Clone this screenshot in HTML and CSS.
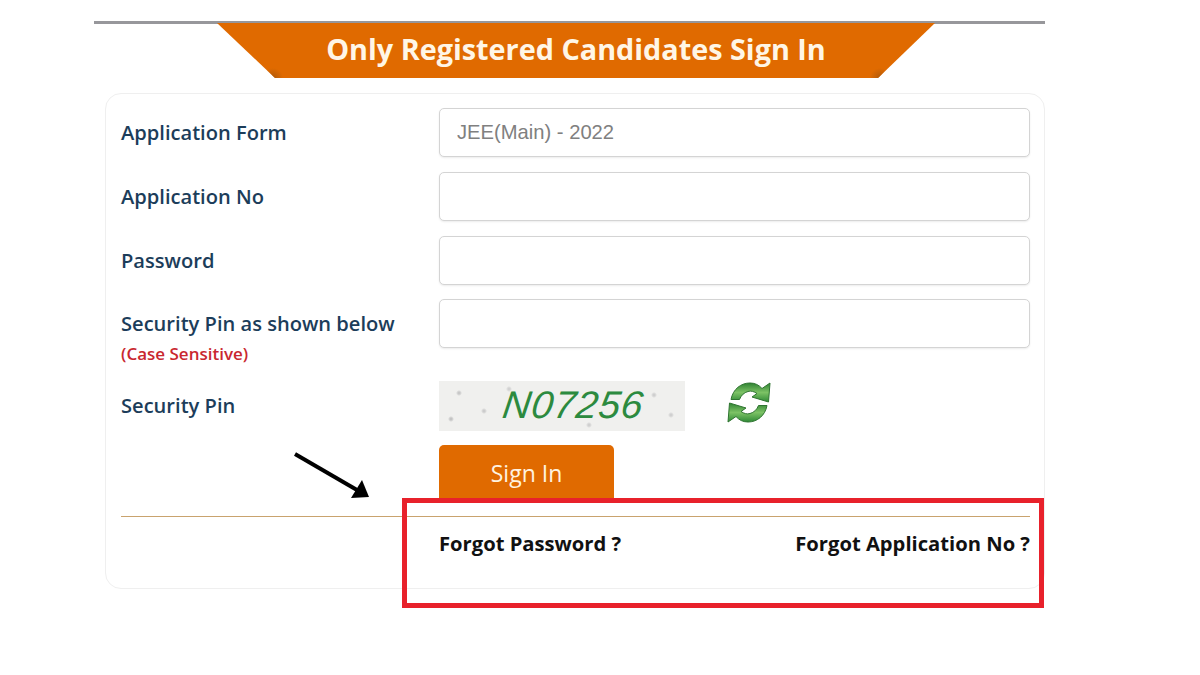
FILE: index.html
```html
<!DOCTYPE html>
<html lang="en">
<head>
    <meta charset="UTF-8">
    <meta name="viewport" content="width=device-width, initial-scale=1.0">
    <title>Candidate Sign In</title>
    <link rel="stylesheet" href="styles.css">
</head>
<body>
    <div class="page">
        <div class="top-line"></div>
        <h1 class="banner">Only Registered Candidates Sign In</h1>

        <form class="card">
            <div class="form-row">
                <label class="form-label">Application Form</label>
                <input class="form-input" type="text" placeholder="JEE(Main) - 2022" disabled>
            </div>
            <div class="form-row">
                <label class="form-label">Application No</label>
                <input class="form-input" type="text">
            </div>
            <div class="form-row">
                <label class="form-label">Password</label>
                <input class="form-input" type="password">
            </div>
            <div class="form-row form-row-pin">
                <label class="form-label">Security Pin as shown below
                    <span class="case-note">(Case Sensitive)</span>
                </label>
                <input class="form-input" type="text">
            </div>
            <div class="form-row captcha-row">
                <label class="form-label">Security Pin</label>
                <div class="captcha-wrap">
                    <div class="captcha"><span class="captcha-text">N07256</span></div>
                    <svg class="refresh-icon" viewBox="0 0 44 44" width="44" height="44">
                        <defs>
                            <linearGradient id="greenA" x1="0" y1="0" x2="0" y2="1">
                                <stop offset="0" stop-color="#2f8232"/>
                                <stop offset="0.5" stop-color="#7cc265"/>
                                <stop offset="1" stop-color="#2f8a36"/>
                            </linearGradient>
                        </defs>
                        <path d="M4 18.500C6 8 14 2 23 2c5 0 9 2 12 5.500L43 2l-1.500 19L25 16l5-3.500C27 10.500 24 9.500 21 10.500c-4 1-7 4-8.500 8z" fill="url(#greenA)" stroke="#2e7430" stroke-width="1"/>
                        <path d="M40 24.500C38 35 30 41 21 41c-5 0-9-2-12-5.500L1 41l1.500-19L19 27l-5 3.500c3 2 6 3 9 2 4-1 7-4 8.500-8z" fill="url(#greenA)" stroke="#2e7430" stroke-width="1"/>
                    </svg>
                </div>
            </div>
            <div class="form-row button-row">
                <span></span>
                <button class="sign-in" type="button">Sign In</button>
            </div>
            <hr class="divider">
            <div class="form-row links-row">
                <span></span>
                <div class="links">
                    <a class="link">Forgot Password ?</a>
                    <a class="link">Forgot Application No ?</a>
                </div>
            </div>
        </form>

        <!-- annotation on top of the screenshot -->
        <svg class="arrow" viewBox="0 0 80 50" width="80" height="50">
            <line x1="2" y1="3" x2="64" y2="39" stroke="#000" stroke-width="4"/>
            <polygon points="76,46 58,47 69,29" fill="#000"/>
        </svg>
        <div class="red-box"></div>
    </div>
</body>
</html>
```

FILE: styles.css
```css
body {
    margin: 0;
    background-color: #fff;
    font-family: "Open Sans", sans-serif;
}

.page {
    position: relative;
    width: 1200px;
    height: 675px;
    overflow: hidden;
    padding-top: 21px;
    box-sizing: border-box;
}

.top-line {
    height: 3px;
    width: 951px;
    margin-left: 94px;
    background-color: #97979b;
}

.banner {
    margin: -1px 0 0 217px;
    width: 718px;
    height: 55px;
    line-height: 52px;
    text-align: center;
    font-size: 28.800px;
    font-weight: 700;
    color: #fff6e6;
    background-color: #e06a00;
    background-image:
        linear-gradient(45deg, transparent 0, transparent 0),
        radial-gradient(circle at 56px 100%, #b05a0a 0, transparent 10px),
        radial-gradient(circle at 663px 100%, #b05a0a 0, transparent 10px);
    clip-path: polygon(0 0, 100% 0, 661px 100%, 58px 100%);
}

.card {
    margin: 15px 0 0 105px;
    width: 940px;
    height: 496px;
    box-sizing: border-box;
    padding: 14.400px 14px 0 15px;
    border: 1px solid #efefef;
    border-radius: 16px;
}

.form-row {
    display: grid;
    grid-template-columns: 318px 591px;
    margin-bottom: 14.600px;
}

.form-label {
    font-size: 20.100px;
    font-weight: 600;
    color: #1c3d5a;
    line-height: 27px;
    padding-top: 11px;
}

.form-input {
    height: 49px;
    box-sizing: border-box;
    padding: 0 17px;
    border: 1px solid #d4d4d4;
    border-radius: 5px;
    background-color: #fff;
    box-shadow: 0 1px 2px rgba(0, 0, 0, 0.08);
    font-family: "Liberation Sans", sans-serif;
    font-size: 20.200px;
}

.form-input::placeholder {
    color: #808080;
    opacity: 1;
}

.case-note {
    display: block;
    font-size: 17px;
    line-height: 22px;
    color: #c9272f;
    margin-top: 6px;
}

.form-row-pin {
    height: 68px;
    margin-bottom: 14px;
}

.captcha-row {
    height: 50px;
    margin-bottom: 14px;
}

.captcha-wrap {
    display: flex;
    gap: 42px;
    align-items: flex-start;
}

.captcha {
    width: 246px;
    height: 50px;
    background-color: #f0f0ee;
    background-image:
        radial-gradient(circle at 20px 12px, #c8c8c8 1px, transparent 3px),
        radial-gradient(circle at 45px 30px, #cccccc 1px, transparent 3px),
        radial-gradient(circle at 12px 38px, #c4c4c4 1px, transparent 3px),
        radial-gradient(circle at 70px 8px, #d2d2d2 1px, transparent 3px),
        radial-gradient(circle at 215px 14px, #cfcfcf 1px, transparent 3px),
        radial-gradient(circle at 232px 34px, #d0d0d0 1px, transparent 3px),
        radial-gradient(circle at 150px 44px, #d0d0d0 1px, transparent 3px);
    text-align: center;
}

.captcha-text {
    display: inline-block;
    margin-left: 22px;
    font-family: "Liberation Sans", sans-serif;
    font-style: italic;
    font-size: 38.500px;
    line-height: 48px;
    letter-spacing: 1px;
    color: #2c8a3f;
    transform: skewX(-8deg);
}

.refresh-icon {
    display: block;
}

.button-row {
    height: 56px;
    margin-bottom: 15px;
}

.sign-in {
    width: 175px;
    height: 56px;
    padding: 0;
    border: none;
    border-radius: 5px 5px 0 0;
    background-color: #e06a00;
    color: #fff3e0;
    font-family: "Open Sans", sans-serif;
    font-size: 23px;
}

.divider {
    margin: 0;
    width: 909px;
    height: 1px;
    border: none;
    background-color: #c9a36e;
}

.links-row {
    margin: 13px 0 0;
}

.links {
    display: flex;
    justify-content: space-between;
}

.link {
    font-size: 20.200px;
    font-weight: 700;
    line-height: 27px;
    color: #111;
}

.arrow {
    position: absolute;
    left: 293px;
    top: 451px;
}

.red-box {
    position: absolute;
    left: 402px;
    top: 498px;
    width: 642px;
    height: 110px;
    box-sizing: border-box;
    border: 5px solid #e8212b;
}
```
